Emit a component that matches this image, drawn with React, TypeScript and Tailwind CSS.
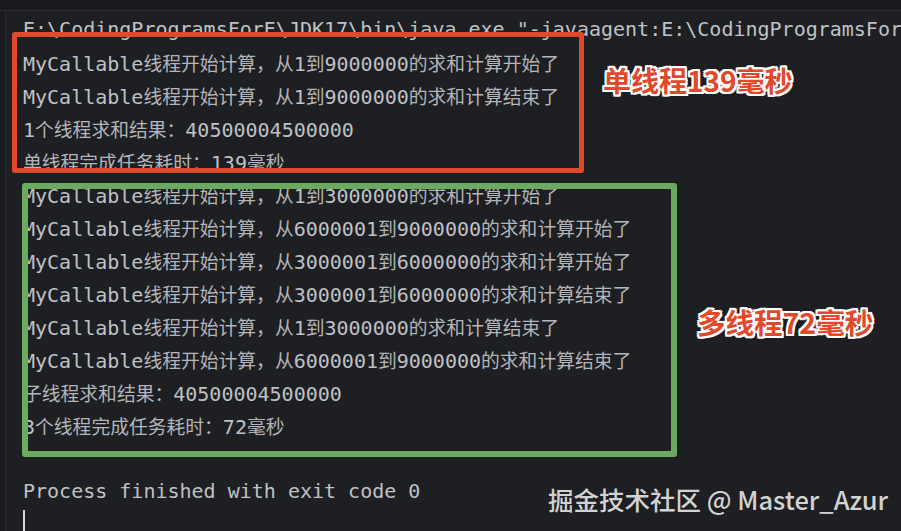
import type { FC } from "react";

const lines = [
  'E:\\CodingProgramsForE\\JDK17\\bin\\java.exe "-javaagent:E:\\CodingProgramsForE',
  "MyCallable线程开始计算，从1到9000000的求和计算开始了",
  "MyCallable线程开始计算，从1到9000000的求和计算结束了",
  "1个线程求和结果：40500004500000",
  "单线程完成任务耗时：139毫秒",
  "MyCallable线程开始计算，从1到3000000的求和计算开始了",
  "MyCallable线程开始计算，从6000001到9000000的求和计算开始了",
  "MyCallable线程开始计算，从3000001到6000000的求和计算开始了",
  "MyCallable线程开始计算，从3000001到6000000的求和计算结束了",
  "MyCallable线程开始计算，从1到3000000的求和计算结束了",
  "MyCallable线程开始计算，从6000001到9000000的求和计算结束了",
  "子线程求和结果：40500004500000",
  "3个线程完成任务耗时：72毫秒",
  "",
  "Process finished with exit code 0",
];

// CJK glyphs come from the fallback font, a bit narrower than two mono cells
const ConsoleLine: FC<{ text: string }> = ({ text }) => {
  const parts = text.split(/([\u3000-\u9fff\uff00-\uffef]+)/);
  return (
    <div className="h-[33px] leading-[33px] whitespace-nowrap">
      {parts.map((p, i) =>
        /[\u3000-\u9fff\uff00-\uffef]/.test(p) ? (
          <span key={i} className="text-[18.8px] text-[#b3b5ba] font-['Noto_Sans_CJK_SC',sans-serif]">
            {p}
          </span>
        ) : (
          <span key={i}>{p}</span>
        )
      )}
    </div>
  );
};

const outline =
  "[text-shadow:2px_0_#fff,-2px_0_#fff,0_2px_#fff,0_-2px_#fff,2px_2px_#fff,-2px_-2px_#fff,2px_-2px_#fff,-2px_2px_#fff,0_0_4px_rgba(0,0,0,0.4)]";

const App: FC = () => {
  return (
    <div className="relative w-[901px] h-[531px] overflow-hidden bg-[#1e1f22] flex flex-col">
      <div className="h-[11px] shrink-0 bg-[#1a1b1e] border-b border-[#2b2d30]" />
      <div className="flex flex-1 min-h-0">
        <div className="w-[6px] shrink-0 bg-[#1a1b1e] border-r border-[#2b2d30]" />
        <div className="flex-1 min-w-0 overflow-hidden pl-[17px] pt-[2px] text-[20px] text-[#bfc1c6] font-['DejaVu_Sans_Mono','Noto_Sans_CJK_SC',monospace]">
          {lines.map((l, i) => (
            <ConsoleLine key={i} text={l} />
          ))}
          <div className="w-[2px] h-[22px] mt-[2px] bg-[#d4d6da]" />
        </div>
      </div>

      {/* annotation boxes drawn over the console */}
      <div className="absolute left-[12px] top-[32px] w-[572px] h-[141px] border-[5px] border-[#e04a2c] rounded-[3px]" />
      <div className="absolute left-[22px] top-[183px] w-[655px] h-[274px] border-[6px] border-[#6aab5f] rounded-[3px]" />

      <div
        className={`absolute left-[603px] top-[64px] text-[28px] leading-[32px] font-bold text-[#e2482a] font-['Noto_Sans_CJK_SC',sans-serif] ${outline}`}
      >
        单线程139毫秒
      </div>
      <div
        className={`absolute left-[697px] top-[306px] text-[28.5px] leading-[32px] font-bold text-[#e2482a] font-['Noto_Sans_CJK_SC',sans-serif] ${outline}`}
      >
        多线程72毫秒
      </div>

      <div className="absolute left-[548px] top-[482px] text-[25.5px] leading-[34px] font-medium text-[#d2d2d2] font-['Noto_Sans_CJK_SC',sans-serif] whitespace-nowrap">
        掘金技术社区 @ Master_Azur
      </div>
    </div>
  );
};

export default App;
